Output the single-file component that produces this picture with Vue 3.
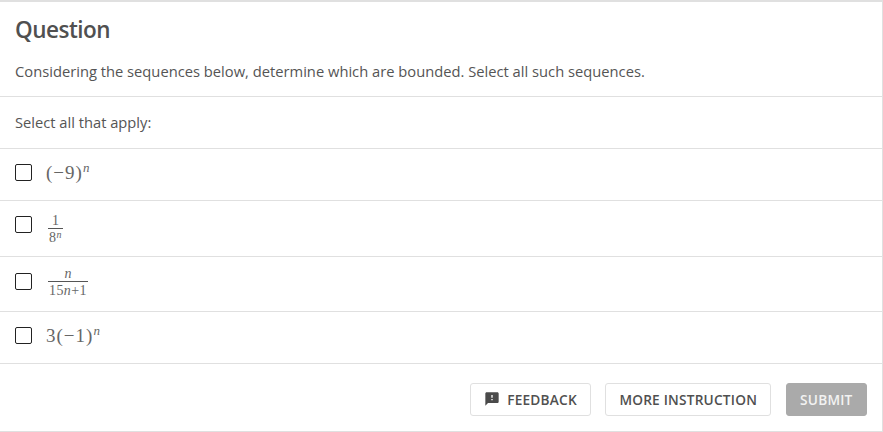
<script setup>
const opciones = [
  { id: 1, tipo: 'potencia', base: '(−9)', alto: 52 },
  { id: 2, tipo: 'fraccion', arriba: '1', abajo: '8', sup: 'n', alto: 56, clase: 'alta' },
  { id: 3, tipo: 'fraccion', arriba: 'n', abajo: '15n+1', italica: true, alto: 55 },
  { id: 4, tipo: 'potencia', base: '3(−1)', alto: 52 }
];
</script>

<template>
  <div class="pregunta">
    <div class="cabecera">
      <h2>Question</h2>
      <p>Considering the sequences below, determine which are bounded. Select all such sequences.</p>
    </div>
    <div class="instruccion">Select all that apply:</div>
    <div v-for="op in opciones" :key="op.id" class="opcion" :class="op.clase" :style="{ height: op.alto + 'px' }">
      <span class="check"></span>
      <span v-if="op.tipo === 'potencia'" class="mate">{{ op.base }}<sup>n</sup></span>
      <span v-else class="fraccion">
        <span class="arriba" :class="{ cursiva: op.italica }">{{ op.arriba }}</span>
        <span class="abajo" v-if="op.italica">15<i>n</i>+1</span>
        <span class="abajo" v-else>{{ op.abajo }}<sup>{{ op.sup }}</sup></span>
      </span>
    </div>
    <div class="acciones">
      <button class="boton">
        <svg width="16" height="16" viewBox="0 0 24 24"><path fill="#4a4a4a" d="M20 2H4c-1.1 0-2 .9-2 2v18l4-4h14c1.1 0 2-.9 2-2V4c0-1.100-.9-2-2-2zm-7 12h-2v-2h2v2zm0-4h-2V6h2v4z"/></svg>
        FEEDBACK
      </button>
      <button class="boton">MORE INSTRUCTION</button>
      <button class="boton enviar">SUBMIT</button>
    </div>
  </div>
</template>

<style>
html, body {
  margin: 0;
  background: #fff;
}
</style>

<style scoped>
.pregunta {
  box-sizing: border-box;
  width: 883px;
  height: 432px;
  margin: 0;
  border-top: 2px solid #e0e0e0;
  border-right: 1px solid #e0e0e0;
  border-bottom: 1px solid #e0e0e0;
  font-family: "Open Sans", sans-serif;
  color: #555;
}

.cabecera {
  box-sizing: border-box;
  height: 95px;
  padding: 13px 15px 0;
  border-bottom: 1px solid #e0e0e0;
}

h2 {
  margin: 0;
  font-size: 22.5px;
  line-height: 30px;
  font-weight: 600;
  letter-spacing: -0.5px;
  color: #505050;
}

p {
  margin: 16px 0 0;
  font-size: 14.72px;
  line-height: 20px;
}

.instruccion {
  box-sizing: border-box;
  height: 52px;
  padding: 15px 15px 0;
  font-size: 14.7px;
  line-height: 20px;
  border-bottom: 1px solid #e0e0e0;
}

.opcion {
  box-sizing: border-box;
  display: flex;
  align-items: center;
  padding: 0 15px 5px;
  border-bottom: 1px solid #e0e0e0;
}

.alta {
  padding-bottom: 9px;
}

.alta .fraccion {
  margin-top: 10px;
}

.check {
  box-sizing: border-box;
  width: 17px;
  height: 17px;
  border: 1.5px solid #222;
  border-radius: 2px;
  margin-right: 14px;
  flex-shrink: 0;
}

.mate {
  font-family: "Liberation Serif", serif;
  font-size: 19px;
  color: #666;
  letter-spacing: 1px;
  padding-top: 2px;
}

.mate sup {
  font-size: 13px;
  font-style: italic;
  line-height: 0;
  vertical-align: 7px;
}

.fraccion {
  display: inline-flex;
  flex-direction: column;
  align-items: center;
  margin-left: 2px;
  font-family: "Liberation Serif", serif;
  font-size: 14px;
  line-height: 13px;
  color: #666;
}

.arriba {
  display: block;
  align-self: stretch;
  text-align: center;
  border-bottom: 1px solid #555;
  padding: 0 1px 1px;
}

.cursiva {
  font-style: italic;
}

.abajo {
  display: block;
  padding: 2px 1px 0;
  letter-spacing: 0.4px;
}

.abajo sup {
  font-size: 10px;
  font-style: italic;
  line-height: 0;
  vertical-align: 4px;
}

.acciones {
  display: flex;
  justify-content: flex-end;
  gap: 14.5px;
  padding: 19px 15px 0;
}

.boton {
  box-sizing: border-box;
  display: flex;
  align-items: center;
  gap: 7px;
  height: 33px;
  padding: 0 13px 1px;
  background: #fff;
  border: 1px solid #e0e0e0;
  border-radius: 3px;
  font-family: "Open Sans", sans-serif;
  font-size: 13.7px;
  font-weight: 600;
  letter-spacing: 0.2px;
  color: #505050;
}

.enviar {
  padding: 0 13.5px 1px;
  background: #aaaaaa;
  border-color: #aaaaaa;
  color: #f2f2f2;
}
</style>
